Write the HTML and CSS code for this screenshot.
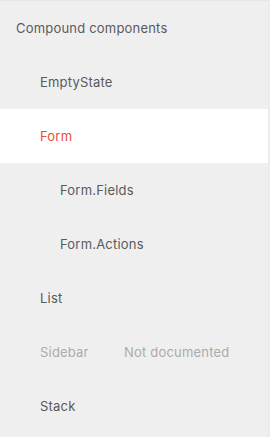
FILE: index.html
```html
<!DOCTYPE html>
<html>
<head>
<meta charset="utf-8">
<link rel="stylesheet" href="styles.css">
</head>
<body>
<nav class="sidebar">
  <div class="item level0">Compound components</div>
  <div class="item level1">EmptyState</div>
  <div class="item level1 active">Form</div>
  <div class="item level2">Form.Fields</div>
  <div class="item level2">Form.Actions</div>
  <div class="item level1">List</div>
  <div class="item level1 disabled"><span class="name">Sidebar</span><span class="note">Not documented</span></div>
  <div class="item level1">Stack</div>
</nav>
</body>
</html>
```
FILE: styles.css
```css
html, body {
  margin: 0;
  padding: 0;
  background: #efefef;
}
.sidebar {
  width: 269px;
  height: 437px;
  box-sizing: border-box;
  border-top: 1px solid #e6e6e6;
  border-right: 1px solid #e8e8e8;
  background: #efefef;
  font-family: Inter, "Liberation Sans", sans-serif;
  font-size: 13px;
  letter-spacing: 0.2px;
  color: #5a5a5a;
  display: flex;
  flex-direction: column;
}
.item {
  height: 54px;
  display: flex;
  align-items: center;
  flex-shrink: 0;
}
.level0 { padding-left: 16px; }
.level1 { padding-left: 40px; }
.level2 { padding-left: 60px; }
.active {
  background: #ffffff;
  color: #e8502e;
}
.disabled { color: #ababab; }
.disabled .name { width: 84px; }
```
